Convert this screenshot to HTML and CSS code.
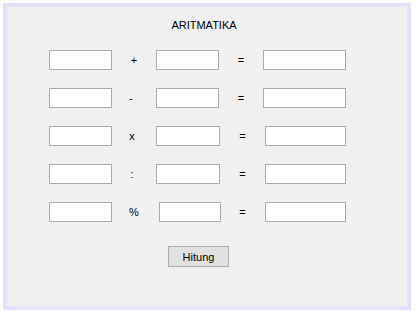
FILE: index.html
```html
<!DOCTYPE html>
<html lang="id">
<head>
  <meta charset="UTF-8">
  <title>Aritmatika</title>
  <link rel="stylesheet" href="styles.css">
</head>
<body>
  <div class="frame">
    <h1 class="title">ARITMATIKA</h1>

    <div class="calc">
      <div class="row">
        <input type="text" class="field num1">
        <span class="op">+</span>
        <input type="text" class="field num2">
        <span class="eq">=</span>
        <input type="text" class="field result">
      </div>
      <div class="row">
        <input type="text" class="field num1">
        <span class="op op-minus">-</span>
        <input type="text" class="field num2">
        <span class="eq">=</span>
        <input type="text" class="field result">
      </div>
      <div class="row row-narrow">
        <input type="text" class="field num1">
        <span class="op op-left">x</span>
        <input type="text" class="field num2 wide">
        <span class="eq">=</span>
        <input type="text" class="field result">
      </div>
      <div class="row row-narrow">
        <input type="text" class="field num1">
        <span class="op op-left">:</span>
        <input type="text" class="field num2 wide">
        <span class="eq">=</span>
        <input type="text" class="field result">
      </div>
      <div class="row row-narrow">
        <input type="text" class="field num1">
        <span class="op">%</span>
        <input type="text" class="field num2 shifted">
        <span class="eq">=</span>
        <input type="text" class="field result">
      </div>
    </div>

    <button class="btn-hitung">Hitung</button>
  </div>
</body>
</html>
```

FILE: styles.css
```css
body, h1, input, button {
  margin: 0;
  padding: 0;
  box-sizing: border-box;
}

body {
  background: #ffffff;
  font-family: "Liberation Sans", Arial, sans-serif;
  font-size: 11px;
  color: #000;
}

/* Window frame */
.frame {
  margin: 3px;
  width: 408px;
  height: 307px;
  box-sizing: border-box;
  border: 4px solid #e2e2f8;
  background-color: #f0f0f0;
  padding-top: 11px;
}

.title {
  font-size: 11px;
  font-weight: normal;
  text-align: center;
  padding-right: 6px;
  line-height: 14px;
}

/* Rows of fields */
.calc {
  display: flex;
  flex-direction: column;
  gap: 18px;
  margin-top: 18px;
  padding-left: 42px;
}

.row {
  display: grid;
  grid-template-columns: 63px 44px 63px 44px 83px;
  height: 20px;
  align-items: center;
}

.field {
  height: 20px;
  width: 100%;
  border: 1px solid #ababab;
  background: #ffffff;
  outline: none;
}

.op, .eq {
  text-align: center;
  line-height: 20px;
}

.op-minus {
  padding-right: 6px;
}

.op-left {
  padding-right: 4px;
}

.row-narrow .eq {
  padding-left: 3px;
}

.row-narrow .result {
  margin-left: 2px;
  width: 81px;
}

.num2.wide {
  width: 64px;
}

.num2.shifted {
  margin-left: 3px;
  width: 62px;
}

/* Button */
.btn-hitung {
  display: block;
  margin: 24px 0 0 161px;
  width: 61px;
  height: 21px;
  background-color: #e1e1e1;
  border: 1px solid #adadad;
  font-family: "Liberation Sans", Arial, sans-serif;
  font-size: 11px;
  color: #000;
}
```
